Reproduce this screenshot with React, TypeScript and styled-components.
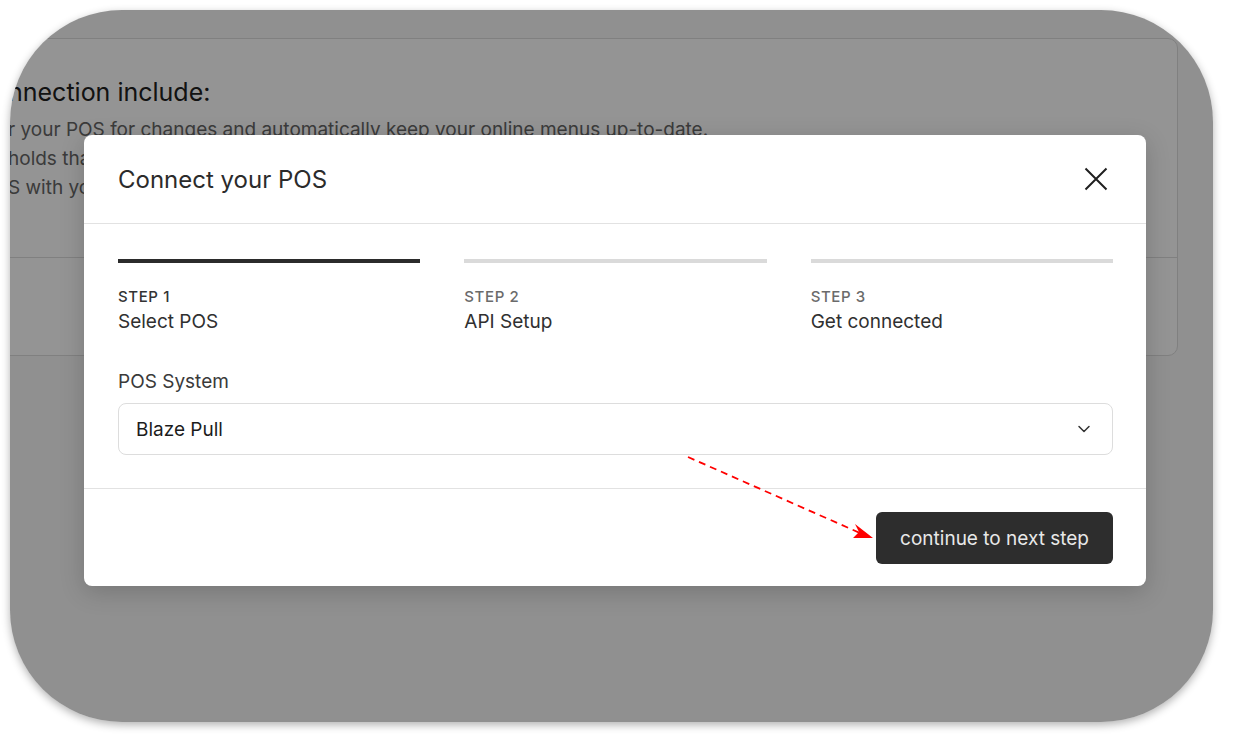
import React from 'react'
import styled, { createGlobalStyle } from 'styled-components'
import { ChevronDown } from 'lucide-react'

const GlobalStyle = createGlobalStyle`
  html, body {
    margin: 0;
    padding: 0;
    background: #ffffff;
    font-family: Inter, "Noto Sans", "Liberation Sans", sans-serif;
    -webkit-font-smoothing: antialiased;
  }
  * {
    box-sizing: border-box;
  }
`

const Stage = styled.div`
  position: relative;
  width: 1233px;
  height: 746px;
  padding: 10px 20px 24px 10px;
`

const Frame = styled.div`
  position: relative;
  width: 1203px;
  height: 712px;
  border-radius: 112px;
  overflow: hidden;
  background: #f8f8f8;
  box-shadow: 0 3px 8px rgba(0, 0, 0, 0.3);
`

const Page = styled.div`
  display: flex;
  flex-direction: column;
  padding-top: 28px;
`

const Card = styled.section`
  width: 1188px;
  margin-left: -20px;
  background: #ffffff;
  border: 1px solid #dcdcdc;
  border-radius: 10px;
`

const CardBody = styled.div`
  display: flex;
  flex-direction: column;
  padding: 37px 0 0 17px;
  height: 219px;
  border-bottom: 1px solid #dcdcdc;
`

const CardHeading = styled.h2`
  margin: 0 0 7px 0;
  font-size: 25px;
  font-weight: 400;
  line-height: 32px;
  color: #202020;
`

const CardLine = styled.p`
  margin: 0;
  font-size: 19px;
  line-height: 29px;
  color: #666666;
  white-space: nowrap;
`

const CardFooter = styled.div`
  height: 97px;
`

const Overlay = styled.div`
  position: absolute;
  inset: 0;
  display: flex;
  align-items: flex-start;
  padding: 125px 0 0 74px;
  background: rgba(0, 0, 0, 0.42);
`

const Modal = styled.div`
  width: 1062px;
  background: #ffffff;
  border-radius: 8px;
  box-shadow: 0 6px 24px rgba(0, 0, 0, 0.18);
`

const ModalHeader = styled.header`
  display: flex;
  align-items: center;
  justify-content: space-between;
  height: 89px;
  padding: 0 38px 0 34px;
  border-bottom: 1px solid #e2e2e2;
`

const ModalTitle = styled.h1`
  margin: 0;
  font-size: 24px;
  font-weight: 400;
  color: #2b2b2b;
`

const CloseButton = styled.button`
  display: flex;
  padding: 0;
  border: 0;
  background: none;
  color: #1f1f1f;
  cursor: pointer;
`

const ModalBody = styled.div`
  padding: 35px 33px 33px 34px;
  border-bottom: 1px solid #e2e2e2;
`

const Steps = styled.ol`
  display: grid;
  grid-template-columns: repeat(3, 1fr);
  column-gap: 44px;
  margin: 0;
  padding: 0;
  list-style: none;
`

const Step = styled.li`
  display: flex;
  flex-direction: column;
`

const StepBar = styled.div<{ $active: boolean }>`
  height: 4px;
  margin-bottom: 24px;
  background: ${p => (p.$active ? '#2b2b2b' : '#dadada')};
`

const StepLabel = styled.span<{ $active: boolean }>`
  font-size: 15px;
  font-weight: 500;
  line-height: 20px;
  letter-spacing: 0.6px;
  text-transform: uppercase;
  color: ${p => (p.$active ? '#333333' : '#6b6b6b')};
`

const StepTitle = styled.span`
  margin-top: 3px;
  font-size: 19px;
  line-height: 24px;
  color: #303030;
`

const Field = styled.div`
  display: flex;
  flex-direction: column;
  margin-top: 36px;
`

const FieldLabel = styled.label`
  margin-bottom: 9px;
  font-size: 19px;
  line-height: 24px;
  color: #3a3a3a;
`

const Select = styled.div`
  display: flex;
  align-items: center;
  justify-content: space-between;
  height: 52px;
  padding: 0 18px 0 17px;
  border: 1px solid #dddddd;
  border-radius: 8px;
  font-size: 19px;
  font-weight: 400;
  color: #1c1c1c;
`

const ModalFooter = styled.footer`
  display: flex;
  justify-content: flex-end;
  padding: 23px 33px 22px;
`

const PrimaryButton = styled.button`
  height: 52px;
  padding: 0 24px;
  border: 0;
  border-radius: 6px;
  background: #2d2d2d;
  color: #e8e8e8;
  font-family: inherit;
  font-size: 19px;
  cursor: pointer;
`

const Annotation = styled.svg`
  position: absolute;
  left: 684px;
  top: 452px;
  overflow: visible;
`

const steps = [
  { label: 'Step 1', title: 'Select POS' },
  { label: 'Step 2', title: 'API Setup' },
  { label: 'Step 3', title: 'Get connected' },
]

const current = 0

export default function App() {
  return (
    <Stage>
      <GlobalStyle />
      <Frame>
        <Page>
          <Card>
            <CardBody>
              <CardHeading>nnection include:</CardHeading>
              <CardLine>r your POS for changes and automatically keep your online menus up-to-date.</CardLine>
              <CardLine>holds that send alerts when items run low on stock.</CardLine>
              <CardLine>S with your online store in just a few clicks.</CardLine>
            </CardBody>
            <CardFooter />
          </Card>
        </Page>
        <Overlay>
          <Modal role="dialog">
            <ModalHeader>
              <ModalTitle>Connect your POS</ModalTitle>
              <CloseButton aria-label="Close">
                <svg width="24" height="24" viewBox="0 0 24 24" fill="none" stroke="currentColor" strokeWidth="2">
                  <path d="M1.5 1.5l21 21M22.5 1.5l-21 21" />
                </svg>
              </CloseButton>
            </ModalHeader>
            <ModalBody>
              <Steps>
                {steps.map((s, i) => (
                  <Step key={s.label}>
                    <StepBar $active={i === current} />
                    <StepLabel $active={i === current}>{s.label}</StepLabel>
                    <StepTitle>{s.title}</StepTitle>
                  </Step>
                ))}
              </Steps>
              <Field>
                <FieldLabel>POS System</FieldLabel>
                <Select>
                  Blaze Pull
                  <ChevronDown size={20} strokeWidth={1.8} color="#333" />
                </Select>
              </Field>
            </ModalBody>
            <ModalFooter>
              <PrimaryButton>continue to next step</PrimaryButton>
            </ModalFooter>
          </Modal>
        </Overlay>
      </Frame>
      <Annotation width="190" height="90" viewBox="0 0 190 90">
        <line x1="4" y1="5" x2="176" y2="81" stroke="#ff0000" strokeWidth="1.8" strokeDasharray="7 5" />
        <path d="M189 86 L169 86 L175 80 L171 72 Z" fill="#ff0000" />
      </Annotation>
    </Stage>
  )
}
